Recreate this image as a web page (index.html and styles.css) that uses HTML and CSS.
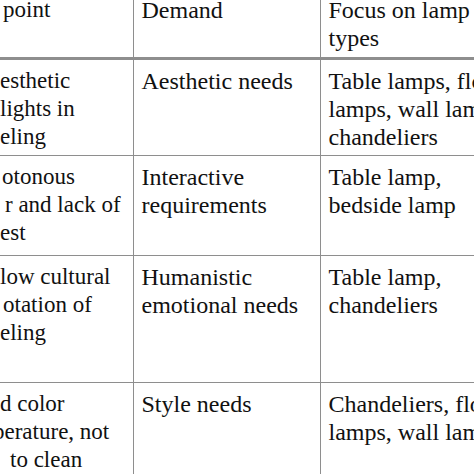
FILE: index.html
```
<!DOCTYPE html>
<html>
<head>
<meta charset="utf-8">
<link rel="stylesheet" href="styles.css">
</head>
<body>
<table class="grid">
  <colgroup><col class="k1"><col class="k2"><col class="k3"></colgroup>
  <tr class="head">
    <td class="c1"><p class="ln o3">point</p></td>
    <td class="c2"><p class="ln">Demand</p></td>
    <td class="c3"><p class="ln">Focus on lamp</p><p class="ln">types</p></td>
  </tr>
  <tr class="r1">
    <td class="c1"><p class="ln">esthetic</p><p class="ln">lights in</p><p class="ln">eling</p></td>
    <td class="c2"><p class="ln">Aesthetic needs</p></td>
    <td class="c3"><p class="ln">Table lamps, floor</p><p class="ln">lamps, wall lamps,</p><p class="ln">chandeliers</p></td>
  </tr>
  <tr class="r2">
    <td class="c1"><p class="ln o2">otonous</p><p class="ln o5">r and lack of</p><p class="ln">est</p></td>
    <td class="c2"><p class="ln">Interactive</p><p class="ln">requirements</p></td>
    <td class="c3"><p class="ln">Table lamp,</p><p class="ln">bedside lamp</p></td>
  </tr>
  <tr class="r3">
    <td class="c1"><p class="ln">low cultural</p><p class="ln o3">otation of</p><p class="ln">eling</p></td>
    <td class="c2"><p class="ln">Humanistic</p><p class="ln">emotional needs</p></td>
    <td class="c3"><p class="ln">Table lamp,</p><p class="ln">chandeliers</p></td>
  </tr>
  <tr class="r4">
    <td class="c1"><p class="ln">d color</p><p class="ln cut">perature, not</p><p class="ln o10">to clean</p></td>
    <td class="c2"><p class="ln">Style needs</p></td>
    <td class="c3"><p class="ln">Chandeliers, floor</p><p class="ln">lamps, wall lamps</p></td>
  </tr>
</table>
</body>
</html>
```
FILE: styles.css
```
html {
  background: #ffffff;
}
body {
  margin: 0;
  padding: 0;
  font-size: 24px;
  overflow: hidden;
}
.grid {
  margin-top: -11px;
  width: 560px;
  table-layout: fixed;
  border-collapse: collapse;
  border-spacing: 0;
}
.k1 { width: 133px; }
.k2 { width: 187px; }
.k3 { width: 240px; }
.grid td {
  padding: 7px 0 0 8px;
  vertical-align: top;
  white-space: nowrap;
  overflow: hidden;
  border-bottom: 1.5px solid #8e8e8e;
}
.grid td.c1 { padding-left: 0; }
.grid td.c2, .grid td.c3 { border-left: 1.5px solid #8e8e8e; }
.grid .head td { height: 61px; border-bottom-width: 3px; }
.grid .r1 td { height: 88px; }
.grid .r2 td { height: 92px; }
.grid .r3 td { height: 119px; }
.grid .r4 td { height: 120px; border-bottom: none; }
.grid .ln {
  margin: 0;
  font-family: "Liberation Serif", serif;
  font-size: 24px;
  line-height: 28px;
  color: #111111;
}
.grid td.c1 .ln { font-size: 23px; }
.o2 { padding-left: 2px; }
.o3 { padding-left: 3px; }
.o5 { padding-left: 5px; }
.o10 { padding-left: 10px; }
.grid td.c1 .cut { margin-left: -7px; }
```
